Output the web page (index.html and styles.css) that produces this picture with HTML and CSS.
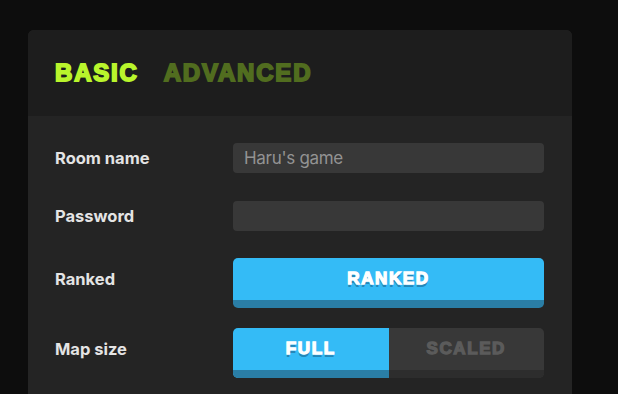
FILE: index.html
```html
<!DOCTYPE html>
<html>
<head>
<meta charset="utf-8">
<link rel="stylesheet" href="styles.css">
</head>
<body>
<div class="panel">
  <div class="tabs">
    <span class="tab active">BASIC</span>
    <span class="tab">ADVANCED</span>
  </div>
  <div class="body">
    <div class="row">
      <div class="label">Room name</div>
      <div class="input">Haru's game</div>
    </div>
    <div class="row">
      <div class="label">Password</div>
      <div class="input"></div>
    </div>
    <div class="row btnrow">
      <div class="label">Ranked</div>
      <div class="btn on">RANKED</div>
    </div>
    <div class="row btnrow">
      <div class="label">Map size</div>
      <div class="seg">
        <div class="btn on">FULL</div>
        <div class="btn off">SCALED</div>
      </div>
    </div>
  </div>
</div>
</body>
</html>
```

FILE: styles.css
```css
html, body {
  margin: 0;
  padding: 0;
  background: #0d0d0d;
  height: 100%;
  overflow: hidden;
}
.panel {
  margin: 30px 0 0 28px;
  width: 544px;
  border-radius: 6px 6px 0 0;
  overflow: hidden;
  background: #242424;
}
.tabs {
  height: 86px;
  background: #1d1d1d;
  display: flex;
  align-items: center;
  padding-left: 27px;
  gap: 25px;
  box-sizing: border-box;
}
.tab {
  font-family: "Liberation Sans", Arial, sans-serif;
  font-weight: 700;
  font-size: 24px;
  letter-spacing: 1.8px;
  -webkit-text-stroke: 1.8px currentColor;
  color: #516d1f;
  line-height: 1;
}
.tab.active {
  color: #b9f52c;
}
.body {
  padding: 27px 28px 40px 27px;
  display: flex;
  flex-direction: column;
  gap: 28px;
}
.row {
  display: flex;
  align-items: center;
}
.btnrow {
  margin-top: -1px;
}
.btnrow + .btnrow {
  margin-top: -8px;
}
.label {
  width: 178px;
  flex: none;
  font-family: Inter, "Noto Sans", sans-serif;
  font-weight: 700;
  font-size: 16.5px;
  color: #e4e4e4;
}
.btnrow .label {
  margin-top: -8px;
}
.input {
  flex: 1;
  height: 30px;
  background: #383838;
  border-radius: 4px;
  box-sizing: border-box;
  padding-left: 11px;
  font-family: Inter, "Noto Sans", sans-serif;
  font-size: 17px;
  letter-spacing: -0.3px;
  color: #939393;
  line-height: 30px;
}
.btn {
  flex: 1;
  height: 50px;
  box-sizing: border-box;
  border-radius: 5px;
  display: flex;
  align-items: center;
  justify-content: center;
  font-family: "Liberation Sans", Arial, sans-serif;
  font-weight: 700;
  font-size: 17px;
  letter-spacing: 1.6px;
  -webkit-text-stroke: 1.3px currentColor;
}
.btn.on {
  background: #34bbf6;
  border-bottom: 8px solid #2a7ea6;
  color: #ffffff;
  text-shadow: 0 3px 0 rgba(20, 90, 130, 0.55);
}
.btn.off {
  background: #383838;
  border-bottom: 8px solid #2d2d2d;
  color: #5b5b5b;
}
.seg {
  flex: 1;
  display: flex;
  border-radius: 5px;
  overflow: hidden;
}
.seg .btn {
  border-radius: 0;
}
```
